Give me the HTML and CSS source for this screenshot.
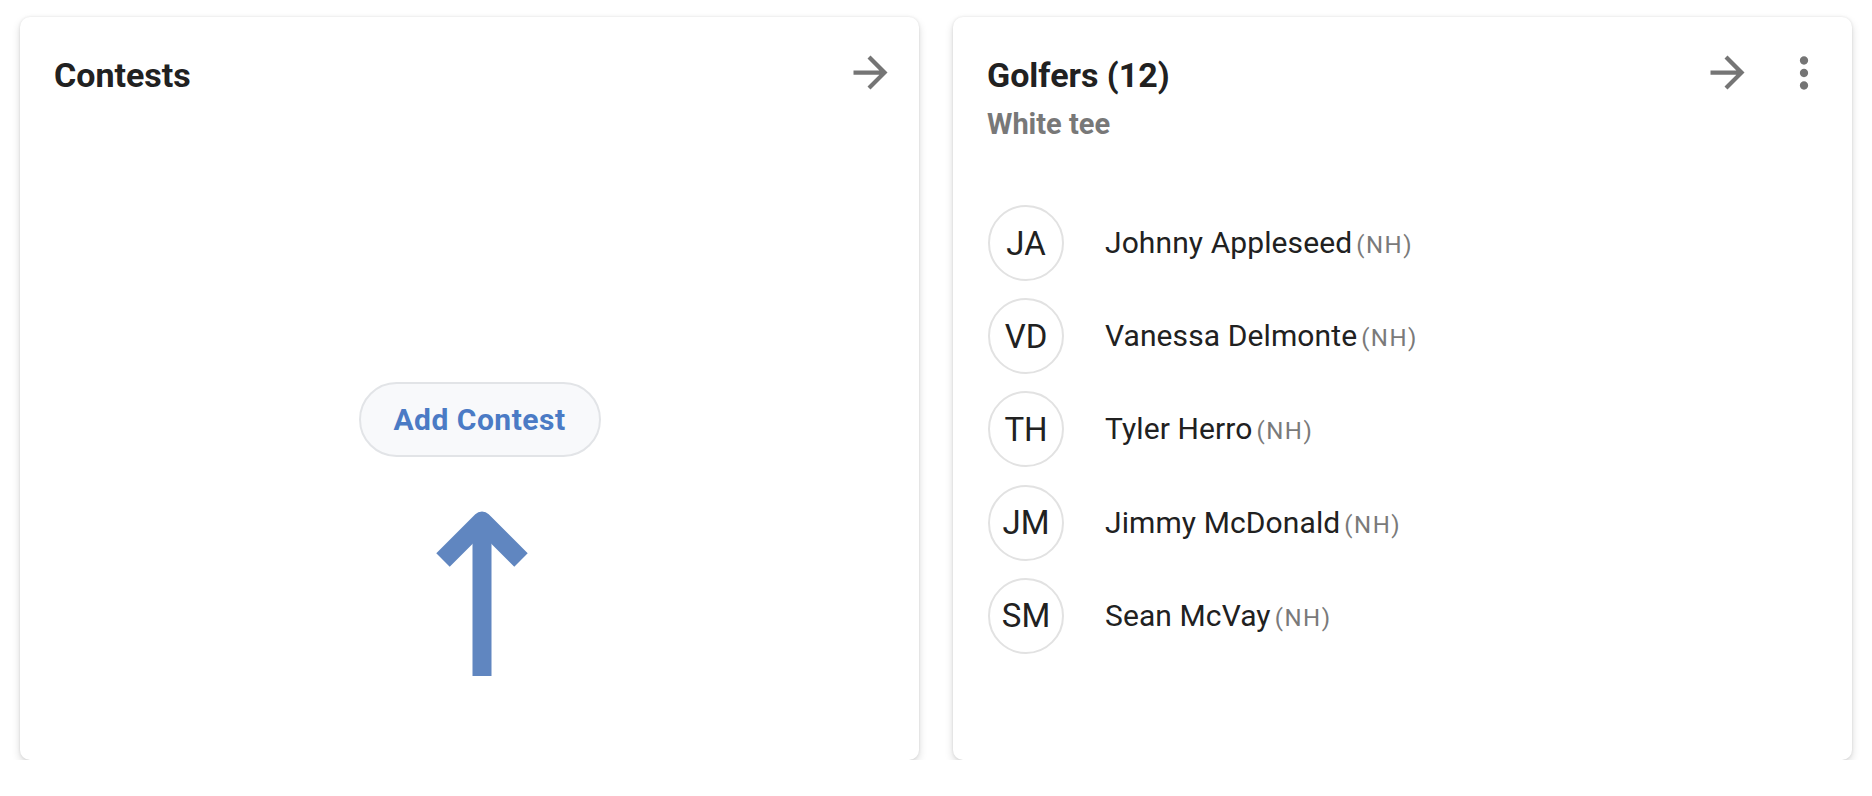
FILE: index.html
```html
<!DOCTYPE html>
<html lang="en">
<head>
<meta charset="utf-8">
<title>Contests and Golfers</title>
<link rel="stylesheet" href="styles.css">
</head>
<body>
<div class="page">
  <section class="card">
    <header class="card-header">
      <div class="title-block">
        <h2 class="card-title">Contests</h2>
      </div>
      <div class="icons">
        <svg class="icon-arrow" viewBox="0 0 24 24" width="51" height="51"><path d="M12 4l-1.41 1.41L16.17 11H4v2h12.17l-5.58 5.59L12 20l8-8z"/></svg>
      </div>
    </header>
    <div class="contest-body">
      <button class="add-btn" type="button">Add Contest</button>
      <svg class="pointer" viewBox="0 0 102 175" width="102" height="175">
        <polyline points="12,55 51,16 90,55" fill="none" stroke="#6086c0" stroke-width="19" stroke-linejoin="round"/>
        <line x1="51" y1="20" x2="51" y2="171" stroke="#6086c0" stroke-width="19"/>
      </svg>
    </div>
  </section>

  <section class="card">
    <header class="card-header">
      <div class="title-block">
        <h2 class="card-title">Golfers (12)</h2>
        <div class="card-subtitle">White tee</div>
      </div>
      <div class="icons">
        <svg class="icon-arrow" viewBox="0 0 24 24" width="51" height="51"><path d="M12 4l-1.41 1.41L16.17 11H4v2h12.17l-5.58 5.59L12 20l8-8z"/></svg>
        <svg class="icon-more" viewBox="0 0 24 24" width="50" height="50"><path d="M12 8c1.1 0 2-.9 2-2s-.9-2-2-2-2 .9-2 2 .9 2 2 2zm0 2c-1.1 0-2 .9-2 2s.9 2 2 2 2-.9 2-2-.9-2-2-2zm0 6c-1.1 0-2 .9-2 2s.9 2 2 2 2-.9 2-2-.9-2-2-2z"/></svg>
      </div>
    </header>
    <ul class="golfers">
      <li class="golfer"><span class="avatar">JA</span><span class="label"><span class="name">Johnny Appleseed</span><span class="hcp">(NH)</span></span></li>
      <li class="golfer"><span class="avatar">VD</span><span class="label"><span class="name">Vanessa Delmonte</span><span class="hcp">(NH)</span></span></li>
      <li class="golfer"><span class="avatar">TH</span><span class="label"><span class="name">Tyler Herro</span><span class="hcp">(NH)</span></span></li>
      <li class="golfer"><span class="avatar">JM</span><span class="label"><span class="name">Jimmy McDonald</span><span class="hcp">(NH)</span></span></li>
      <li class="golfer"><span class="avatar">SM</span><span class="label"><span class="name">Sean McVay</span><span class="hcp">(NH)</span></span></li>
    </ul>
  </section>
</div>
</body>
</html>
```

FILE: styles.css
```css
* { box-sizing: border-box; }

html, body {
  margin: 0;
  padding: 0;
  background: #ffffff;
  font-family: Roboto, "Liberation Sans", Arial, sans-serif;
  color: #212121;
}

.page {
  display: grid;
  grid-template-columns: 1fr 1fr;
  gap: 34px;
  padding: 17px 20px 0;
}

.card {
  height: 743px;
  background: #ffffff;
  border-radius: 10px;
  box-shadow: 0 4px 8px rgba(0, 0, 0, 0.15), 0 0 3px rgba(0, 0, 0, 0.10);
  overflow: hidden;
}

.card-header {
  display: flex;
  justify-content: space-between;
  align-items: flex-start;
  padding: 30px 23px 0 34px;
}

.title-block {
  margin-top: 8px;
}

.card-title {
  margin: 0;
  font-size: 34px;
  line-height: 40px;
  font-weight: 700;
  color: #212121;
}

.card-subtitle {
  margin-top: 11px;
  font-size: 29px;
  line-height: 36px;
  font-weight: 700;
  color: #787878;
}

.icons {
  display: flex;
  align-items: center;
  gap: 26px;
}

.icons svg {
  display: block;
  fill: #757575;
}

.contest-body {
  display: flex;
  flex-direction: column;
  align-items: center;
  margin-top: 284px;
  padding-left: 20px;
}

.add-btn {
  width: 242px;
  height: 75px;
  border: 2px solid #e2e4e7;
  border-radius: 38px;
  background: #f8f9fb;
  font-family: Roboto, "Liberation Sans", Arial, sans-serif;
  font-size: 30px;
  font-weight: 700;
  letter-spacing: 0.5px;
  color: #4b7bc5;
  padding: 0;
}

.pointer {
  display: block;
  margin-top: 48px;
  margin-left: 4px;
}

.golfers {
  list-style: none;
  margin: 63px 0 0;
  padding: 0 0 0 35px;
  display: flex;
  flex-direction: column;
  gap: 17.2px;
}

.golfer {
  display: flex;
  align-items: center;
}

.avatar {
  flex: none;
  width: 76px;
  height: 76px;
  border: 2px solid #e2e2e2;
  border-radius: 50%;
  display: flex;
  align-items: center;
  justify-content: center;
  font-size: 33px;
  color: #212121;
}

.label {
  margin-left: 41px;
  padding-top: 5px;
  line-height: 36px;
}

.name {
  font-size: 30px;
  letter-spacing: 0.1px;
  color: #212121;
}

.hcp {
  margin-left: 4px;
  font-size: 24px;
  letter-spacing: 1.5px;
  color: #7a7a7a;
}
```
